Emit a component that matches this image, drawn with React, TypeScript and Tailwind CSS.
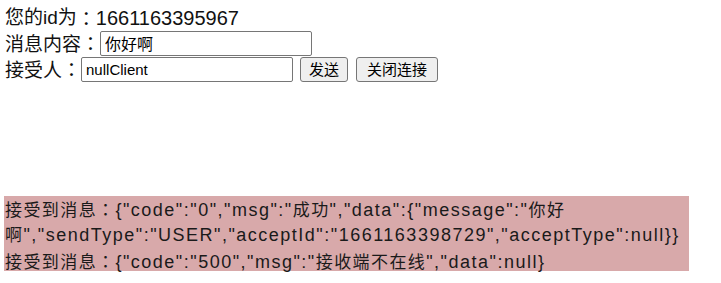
const font = { fontFamily: '"Liberation Sans", "Noto Sans CJK SC", sans-serif' };

const messages = [
  '接受到消息：{"code":"0","msg":"成功","data":{"message":"你好',
  '啊","sendType":"USER","acceptId":"1661163398729","acceptType":null}}',
  '接受到消息：{"code":"500","msg":"接收端不在线","data":null}',
];

// centred full-width colon, like the YaHei one in the screenshot
const Colon = () => <span style={{ fontFamily: '"Noto Sans CJK TC", sans-serif' }}>：</span>;

function MessageLine({ text }: { text: string }) {
  const parts = text.split(/([\u3000-\u9fff\uff00-\uffef]+)/).filter(Boolean);
  return (
    <div className="whitespace-nowrap">
      {parts.map((p, i) =>
        /[\u3000-\u9fff\uff00-\uffef]/.test(p) ? (
          <span key={i} className="text-[17px] tracking-[1.4px]">
            {p.split("").map((c, j) => (c === "：" ? <Colon key={j} /> : c))}
          </span>
        ) : (
          <span key={i} className="text-[18px] tracking-[1.5px]">
            {p}
          </span>
        )
      )}
    </div>
  );
}

export default function App() {
  return (
    <div className="w-[721px] h-[283px] bg-white text-[#111] pl-[5px] pt-[5px]" style={font}>
      <div className="h-[25px] flex items-center text-[19px] leading-none">
        您的id为<Colon />
        <span className="text-[20px]">1661163395967</span>
      </div>
      <div className="h-[26px] flex items-center text-[19px] leading-none">
        <span>
          消息内容<Colon />
        </span>
        <input
          defaultValue="你好啊"
          className="w-[212px] h-[25px] border border-[#767676] rounded-[2px] px-[4px] text-[16px] text-black outline-none"
        />
      </div>
      <div className="h-[26px] flex items-center text-[19px] leading-none">
        <span>
          接受人<Colon />
        </span>
        <input
          defaultValue="nullClient"
          className="w-[212px] h-[25px] border border-[#767676] rounded-[2px] px-[4px] text-[15px] text-black outline-none"
        />
        <button className="ml-[7px] w-[48px] h-[25px] bg-[#efefef] border border-[#767676] rounded-[3px] text-[15px] text-black">
          发送
        </button>
        <button className="ml-[8px] w-[82px] h-[25px] bg-[#efefef] border border-[#767676] rounded-[3px] text-[15px] text-black">
          关闭连接
        </button>
      </div>
      <div className="mt-[114px] -ml-px w-[685px] h-[75px] bg-[#d8a9aa] leading-[25px] text-[#1a1a1a] pl-px">
        {messages.map((m, i) => (
          <MessageLine key={i} text={m} />
        ))}
      </div>
    </div>
  );
}
